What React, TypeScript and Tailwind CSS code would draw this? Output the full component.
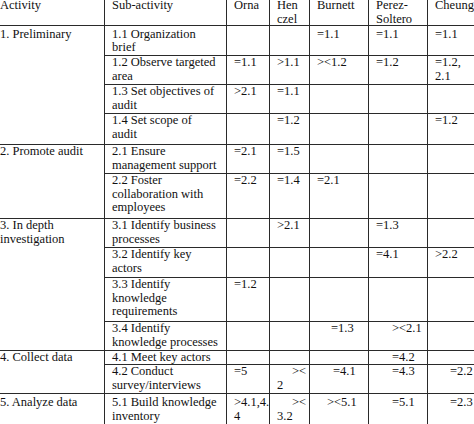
import type { ReactNode } from "react";
import clsx from "clsx";

type Val = string | { t: string; pl?: string; under?: string };

type Item = {
  sub: string;
  pt?: string;
  vals: Val[];
};

type Group = {
  activity: string;
  span: string;
  items: Item[];
};

const GROUPS: Group[] = [
  {
    activity: "1. Preliminary",
    span: "row-span-4",
    items: [
      { sub: "1.1 Organization\nbrief", pt: "pt-[1.5px]", vals: ["", "", "=1.1", "=1.1", "=1.1"] },
      { sub: "1.2 Observe targeted\narea", vals: ["=1.1", ">1.1", "><1.2", "=1.2", "=1.2,\n2.1"] },
      { sub: "1.3 Set objectives of\naudit", vals: [">2.1", "=1.1", "", "", ""] },
      { sub: "1.4 Set scope of\naudit", vals: ["", "=1.2", "", "", "=1.2"] },
    ],
  },
  {
    activity: "2. Promote audit",
    span: "row-span-2",
    items: [
      { sub: "2.1 Ensure\nmanagement support", vals: ["=2.1", "=1.5", "", "", ""] },
      { sub: "2.2 Foster\ncollaboration with\nemployees", vals: ["=2.2", "=1.4", "=2.1", "", ""] },
    ],
  },
  {
    activity: "3. In depth\ninvestigation",
    span: "row-span-4",
    items: [
      { sub: "3.1 Identify business\nprocesses", vals: ["", ">2.1", "", "=1.3", ""] },
      { sub: "3.2 Identify key\nactors", vals: ["", "", "", "=4.1", ">2.2"] },
      { sub: "3.3 Identify\nknowledge\nrequirements", vals: ["=1.2", "", "", "", ""] },
      {
        sub: "3.4 Identify\nknowledge processes",
        vals: ["", "", { t: "=1.3", pl: "pl-[21px]" }, { t: "><2.1", pl: "pl-[23px]" }, ""],
      },
    ],
  },
  {
    activity: "4. Collect data",
    span: "row-span-2",
    items: [
      { sub: "4.1 Meet key actors", vals: ["", "", "", { t: "=4.2", pl: "pl-[23px]" }, ""] },
      {
        sub: "4.2 Conduct\nsurvey/interviews",
        vals: [
          "=5",
          { t: "><", under: "2" },
          { t: "=4.1", pl: "pl-[23px]" },
          { t: "=4.3", pl: "pl-[23px]" },
          { t: "=2.2", pl: "pl-[22px]" },
        ],
      },
    ],
  },
  {
    activity: "5. Analyze data",
    span: "row-span-1",
    items: [
      {
        sub: "5.1 Build knowledge\ninventory",
        pt: "pt-[2px]",
        vals: [
          ">4.1,4.\n4",
          { t: "><", under: "3.2" },
          { t: "><5.1", pl: "pl-[17px]" },
          { t: "=5.1", pl: "pl-[23px]" },
          { t: "=2.3", pl: "pl-[22px]" },
        ],
      },
    ],
  },
];

const HEADERS = ["Activity", "Sub-activity", "Orna", "Hen\nczel", "Burnett", "Perez-\nSoltero", "Cheung"];

function Cell({ children, className }: { children?: ReactNode; className?: string }) {
  return (
    <div className={clsx("whitespace-pre border-r border-b border-[#2a2a2a] pl-[7px]", className)}>
      {children}
    </div>
  );
}

function ValueCell({ val, pt }: { val: Val; pt?: string }) {
  if (typeof val === "string") {
    return <Cell className={clsx("pl-[6.5px]", pt)}>{val}</Cell>;
  }
  if (val.under) {
    return (
      <Cell className={clsx("pl-[6.5px]", pt)}>
        <div className="pr-[3px] text-right">{val.t}</div>
        <div>{val.under}</div>
      </Cell>
    );
  }
  return <Cell className={clsx(val.pl, pt)}>{val.t}</Cell>;
}

export default function App() {
  return (
    <div className="h-screen w-screen overflow-hidden bg-white">
      <div
        className="ml-[-8px] mt-[-2px] grid w-max grid-cols-[112px_122px_43px_40px_59px_59px_60px] grid-rows-[27px_30px_29px_29px_31px_29px_45px_29px_30px_44px_29px_14px_29px_33px] border-t border-l border-[#2a2a2a] text-[12.5px] leading-[13.7px] text-[#111]"
        style={{ fontFamily: '"Liberation Serif", "Times New Roman", serif' }}>
        {HEADERS.map((h) => (
          <Cell key={h}>{h}</Cell>
        ))}

        {GROUPS.map((group) =>
          group.items.map((item, i) => (
            <div key={item.sub} className="contents">
              {i === 0 && <Cell className={clsx(group.span, item.pt)}>{group.activity}</Cell>}
              <Cell className={item.pt}>{item.sub}</Cell>
              {item.vals.map((v, j) => (
                <ValueCell key={j} val={v} pt={item.pt} />
              ))}
            </div>
          )),
        )}
      </div>
    </div>
  );
}
